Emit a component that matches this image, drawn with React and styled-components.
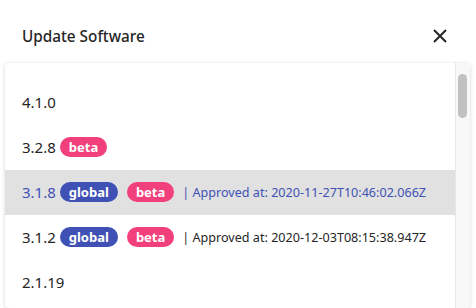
import React from 'react';
import styled, { createGlobalStyle } from 'styled-components';

const GlobalStyle = createGlobalStyle`
  html, body {
    margin: 0;
    padding: 0;
    background: #ffffff;
    overflow: hidden;
  }
  body {
    font-family: "Noto Sans", "Open Sans", sans-serif;
    color: #212121;
  }
`;

const Dialog = styled.div`
  width: 476px;
  height: 308px;
  display: flex;
  flex-direction: column;
  background: #ffffff;
`;

const Header = styled.div`
  display: flex;
  align-items: center;
  justify-content: space-between;
  padding: 22px 28px 13px 22px;
  height: 28px;
`;

const Title = styled.h2`
  margin: 0;
  font-size: 15.3px;
  font-weight: 500;
  color: #262626;
`;

const CloseButton = styled.button`
  border: none;
  background: none;
  padding: 0;
  width: 16px;
  height: 16px;
  display: flex;
  align-items: center;
  justify-content: center;
  cursor: pointer;
  color: #262626;
`;

const ListBox = styled.div`
  margin: 0 6px 0 5px;
  height: 250px;
  border-radius: 4px;
  box-shadow: 0 1px 4px rgba(0, 0, 0, 0.14), 0 0 2px rgba(0, 0, 0, 0.06);
  background: #ffffff;
  display: flex;
  overflow: hidden;
`;

const List = styled.ul`
  flex: 1;
  list-style: none;
  margin: 0;
  padding: 17px 0;
  overflow: hidden;
`;

const ScrollTrack = styled.div`
  width: 15px;
  flex: none;
  box-sizing: border-box;
  background: #f8f8f8;
  border-left: 1px solid #e6e6e6;
  padding: 11px 2px 0 2px;
`;

const ScrollThumb = styled.div`
  width: 9px;
  height: 44px;
  border-radius: 5px;
  background: #c1c1c1;
`;

const Row = styled.li`
  height: 45px;
  display: flex;
  align-items: center;
  padding: 0 17px;
  background: ${(p) => (p.$selected ? '#e1e1e1' : 'transparent')};
  color: ${(p) => (p.$selected ? '#3f51b5' : '#262626')};
`;

const Version = styled.span`
  font-size: 15px;
  margin-right: 4px;
`;

const Badge = styled.span`
  display: inline-flex;
  align-items: center;
  height: 20px;
  padding: 0 9px;
  border-radius: 10px;
  margin-right: 9px;
  font-size: 13px;
  font-weight: 700;
  color: #ffffff;
  background: ${(p) => (p.$kind === 'global' ? '#3f51b5' : '#f2407c')};
`;

const Approved = styled.span`
  font-size: 12.6px;
  margin-left: -1px;
  white-space: nowrap;
`;

const versions = [
  { v: '4.1.0' },
  { v: '3.2.8', tags: ['beta'] },
  { v: '3.1.8', tags: ['global', 'beta'], approved: '2020-11-27T10:46:02.066Z', selected: true },
  { v: '3.1.2', tags: ['global', 'beta'], approved: '2020-12-03T08:15:38.947Z' },
  { v: '2.1.19' },
];

export default function App() {
  return (
    <>
      <GlobalStyle />
      <Dialog>
        <Header>
          <Title>Update Software</Title>
          <CloseButton aria-label="close">
            <svg width="14" height="14" viewBox="0 0 14 14">
              <path d="M1 1L13 13M13 1L1 13" stroke="currentColor" strokeWidth="2" />
            </svg>
          </CloseButton>
        </Header>
        <ListBox>
          <List>
            {versions.map((item) => (
              <Row key={item.v} $selected={item.selected}>
                <Version>{item.v}</Version>
                {(item.tags || []).map((t) => (
                  <Badge key={t} $kind={t}>{t}</Badge>
                ))}
                {item.approved && <Approved>| Approved at: {item.approved}</Approved>}
              </Row>
            ))}
          </List>
          <ScrollTrack>
            <ScrollThumb />
          </ScrollTrack>
        </ListBox>
      </Dialog>
    </>
  );
}
